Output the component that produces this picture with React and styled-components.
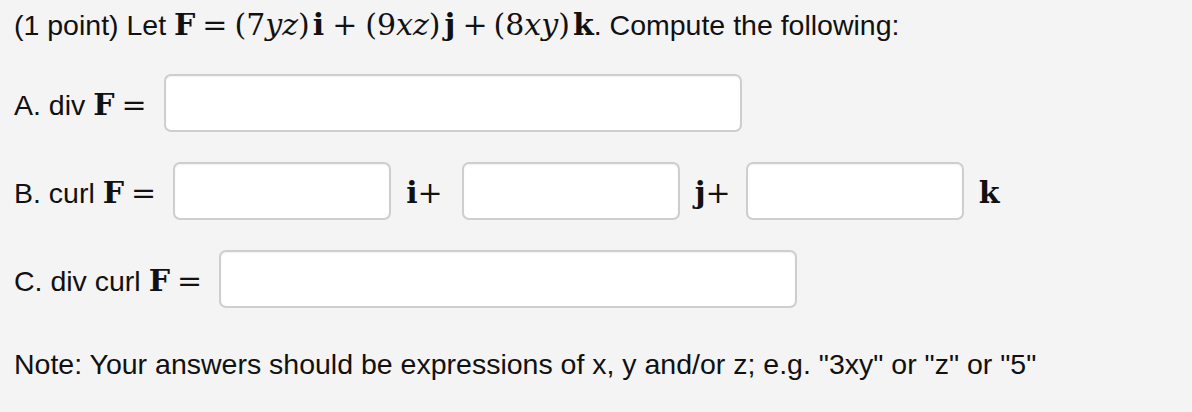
import React from 'react';
import styled, { createGlobalStyle } from 'styled-components';

const GlobalStyle = createGlobalStyle`
body {
  margin: 0;
  background: #f4f4f4;
  font-family: "Liberation Sans", Arial, Helvetica, sans-serif;
  color: #111;
}
`

const Page = styled.div`
padding: 5px 14px 0 14px;
font-size: 28.5px;
line-height: 40px;
`

const Intro = styled.div`
white-space: nowrap;
`

const Math = styled.span`
font-family: "DejaVu Serif", "Liberation Serif", serif;
font-size: 30px;
`

const Bold = styled.span`
font-weight: 700;
margin-left: ${props => props.l || 0}px;
`

const Ital = styled.span`
font-style: italic;
`

const Op = styled.span`
margin: 0 ${props => props.r ?? props.l ?? 6}px 0 ${props => props.l ?? 6}px;
`

const Row = styled.div`
display: flex;
align-items: center;
height: 58px;
margin-top: ${props => props.top}px;
white-space: nowrap;
`

const Label = styled.span`
margin-right: 17px;
padding-top: 4px;
`

const Answer = styled.input`
box-sizing: border-box;
width: ${props => props.w}px;
height: 58px;
margin: 0;
border: 2px solid #cecece;
border-radius: 7px;
background: #fff;
box-shadow: inset 0 1px 2px rgba(0, 0, 0, 0.06);
outline: none;
`

const Unit = styled(Math)`
margin: 4px ${props => props.after}px 0 15px;
`

const Note = styled.div`
margin-top: 36px;
`

const App = () => {
  return (
    <>
      <GlobalStyle />
      <Page>
        <Intro>
          (1 point) Let <Math><Bold>F</Bold><Op l={7} r={7}>=</Op>(7<Ital>yz</Ital>)<Bold l={3}>i</Bold><Op l={8} r={8}>+</Op>(9<Ital>xz</Ital>)<Bold l={4}>j</Bold><Op l={7} r={6}>+</Op>(8<Ital>xy</Ital>)<Bold l={3}>k</Bold></Math>. Compute the following:
        </Intro>

        <Row top={29}>
          <Label>A. div <Math><Bold>F</Bold><Op l={7} r={0}>=</Op></Math></Label>
          <Answer w={578} />
        </Row>

        <Row top={30}>
          <Label>B. curl <Math><Bold>F</Bold><Op l={7} r={0}>=</Op></Math></Label>
          <Answer w={218} />
          <Unit after={19}><Bold>i</Bold>+</Unit>
          <Answer w={218} />
          <Unit after={15}><Bold>j</Bold>+</Unit>
          <Answer w={218} />
          <Unit after={0}><Bold>k</Bold></Unit>
        </Row>

        <Row top={30}>
          <Label>C. div curl <Math><Bold>F</Bold><Op l={7} r={0}>=</Op></Math></Label>
          <Answer w={578} />
        </Row>

        <Note>Note: Your answers should be expressions of x, y and/or z; e.g. "3xy" or "z" or "5"</Note>
      </Page>
    </>
  );
};

export default App;
